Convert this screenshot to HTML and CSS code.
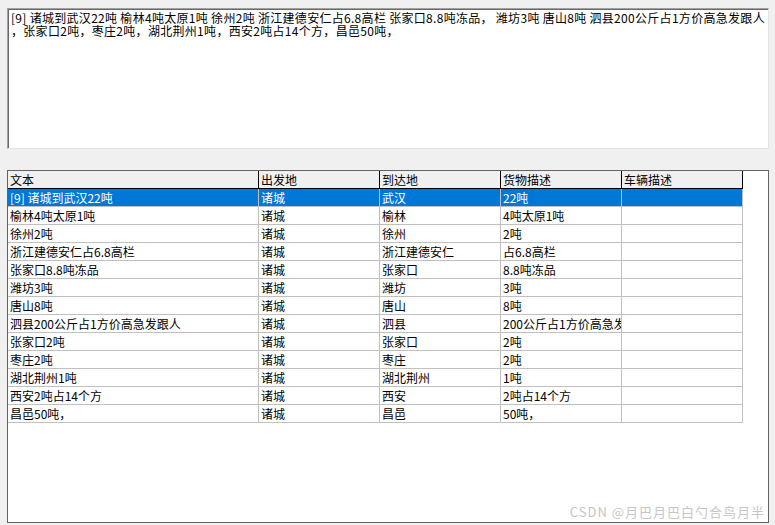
FILE: index.html
```html
<!DOCTYPE html>
<html lang="zh-CN">
<head>
    <meta charset="UTF-8">
    <title>货源解析</title>
    <link rel="stylesheet" href="styles.css">
</head>
<body>

    <!-- raw message input -->
    <div class="input-box">
        <div class="input-line">[9] 诸城到武汉22吨 榆林4吨太原1吨 徐州2吨 浙江建德安仁占6.8高栏 张家口8.8吨冻品， 潍坊3吨 唐山8吨 泗县200公斤占1方价高急发跟人</div>
        <div class="input-line">，张家口2吨，枣庄2吨，湖北荆州1吨，西安2吨占14个方，昌邑50吨，</div>
    </div>

    <!-- parsed results -->
    <div class="grid-box">
        <div class="grid-row header">
            <div class="cell">文本</div>
            <div class="cell">出发地</div>
            <div class="cell">到达地</div>
            <div class="cell">货物描述</div>
            <div class="cell">车辆描述</div>
        </div>
        <div id="rows"></div>
        <div class="watermark">CSDN @月巴月巴白勺合鸟月半</div>
    </div>

    <script>
        const rows = [
            ["[9] 诸城到武汉22吨", "诸城", "武汉", "22吨"],
            ["榆林4吨太原1吨", "诸城", "榆林", "4吨太原1吨"],
            ["徐州2吨", "诸城", "徐州", "2吨"],
            ["浙江建德安仁占6.8高栏", "诸城", "浙江建德安仁", "占6.8高栏"],
            ["张家口8.8吨冻品", "诸城", "张家口", "8.8吨冻品"],
            ["潍坊3吨", "诸城", "潍坊", "3吨"],
            ["唐山8吨", "诸城", "唐山", "8吨"],
            ["泗县200公斤占1方价高急发跟人", "诸城", "泗县", "200公斤占1方价高急发跟人"],
            ["张家口2吨", "诸城", "张家口", "2吨"],
            ["枣庄2吨", "诸城", "枣庄", "2吨"],
            ["湖北荆州1吨", "诸城", "湖北荆州", "1吨"],
            ["西安2吨占14个方", "诸城", "西安", "2吨占14个方"],
            ["昌邑50吨，", "诸城", "昌邑", "50吨，"]
        ];

        let html = "";
        rows.forEach((r, i) => {
            html += `
                <div class="grid-row${i === 0 ? " selected" : ""}">
                    <div class="cell">${r[0]}</div>
                    <div class="cell">${r[1]}</div>
                    <div class="cell">${r[2]}</div>
                    <div class="cell">${r[3]}</div>
                    <div class="cell"></div>
                </div>
            `;
        });
        document.getElementById("rows").innerHTML = html;
    </script>

</body>
</html>
```

FILE: styles.css
```css
body {
    margin: 0;
    padding: 8px 6px 0 7px;
    background-color: #f0f0f0;
    font-family: "Noto Sans CJK SC", "DejaVu Sans", sans-serif;
    font-size: 12px;
    color: #000;
    height: 525px;
    box-sizing: border-box;
    overflow: hidden;
}

.input-box {
    height: 141px;
    box-sizing: border-box;
    background-color: #fff;
    border-top: 1px solid #a0a0a0;
    border-left: 1px solid #a0a0a0;
    border-right: 1px solid #e3e3e3;
    border-bottom: 1px solid #e3e3e3;
    box-shadow: inset 1px 1px 0 #696969;
    padding: 2px 0 0 3px;
    overflow: hidden;
}

.input-line {
    white-space: nowrap;
    height: 13px;
    line-height: 13px;
    letter-spacing: 0.3px;
}

.grid-box {
    position: relative;
    margin-top: 21px;
    height: 353px;
    box-sizing: border-box;
    background-color: #fff;
    border: 1px solid #646464;
}

.grid-row {
    display: grid;
    grid-template-columns: 251px 121px 121px 121px 121px;
    height: 18px;
}

.cell {
    box-sizing: border-box;
    border-right: 1px solid #c0c0c0;
    border-bottom: 1px solid #c0c0c0;
    padding-left: 2px;
    line-height: 17px;
    white-space: nowrap;
    overflow: hidden;
}

.header .cell {
    background-color: #f0f0f0;
    border-right-color: #000;
    border-bottom-color: #000;
}

.selected .cell {
    background-color: #0078d7;
    color: #fff;
}

.watermark {
    position: absolute;
    right: 3px;
    bottom: 1px;
    font-size: 13px;
    letter-spacing: 1px;
    color: #c6c6c6;
    white-space: nowrap;
}
```
